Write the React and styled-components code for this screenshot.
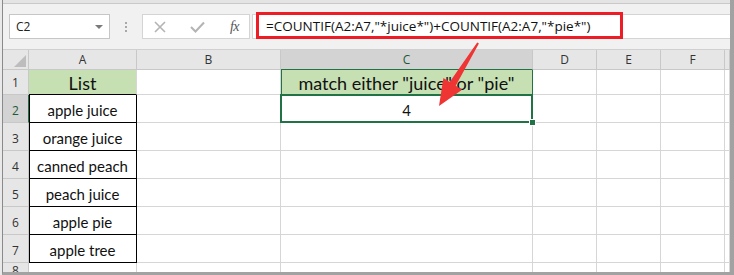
import React from "react";
import styled, { createGlobalStyle } from "styled-components";

const Global = createGlobalStyle`
  html, body { margin: 0; padding: 0; background: #e9e9e9; }
  * { box-sizing: border-box; }
`;

const Window = styled.div`
  position: relative;
  width: 734px;
  height: 275px;
  background: #e9e9e9;
  padding-left: 2px;
  overflow: hidden;
`;

const Inner = styled.div`
  height: 100%;
  display: flex;
  flex-direction: column;
  background: #f1f1f1;
  border-left: 1px solid #8a8a8a;
  border-right: 4px solid #a2a2a2;
  border-bottom: 3px solid #a2a2a2;
  overflow: hidden;
`;

const TopStrip = styled.div`
  height: 4px;
  flex: none;
  background: #e4e4e4;
  border-bottom: 1px solid #c9c9c9;
`;

const FormulaBar = styled.div`
  height: 46px;
  flex: none;
  display: flex;
  align-items: flex-start;
  padding-top: 10px;
  padding-left: 6px;
  background: #f1f1f1;
  border-bottom: 1px solid #d0d0d0;
`;

const NameBox = styled.div`
  width: 101px;
  height: 25px;
  background: #fff;
  border: 1px solid #c6c6c6;
  display: flex;
  align-items: center;
  justify-content: space-between;
  padding: 0 6px 0 6px;
  font-family: "Open Sans", sans-serif;
  font-size: 12px;
  color: #222;
`;

const Caret = styled.span`
  width: 0;
  height: 0;
  border-left: 4px solid transparent;
  border-right: 4px solid transparent;
  border-top: 4px solid #7a7a7a;
`;

const Grip = styled.div`
  width: 32px;
  height: 25px;
  display: flex;
  flex-direction: column;
  align-items: center;
  justify-content: center;
  gap: 2px;
`;

const Dot = styled.span`
  width: 2px;
  height: 2px;
  background: #a8a8a8;
`;

const FxBox = styled.div`
  width: 108px;
  height: 25px;
  background: #fff;
  border: 1px solid #d4d4d4;
  display: flex;
  align-items: center;
  justify-content: space-between;
  padding: 0 10px 0 11px;
`;

const FxLabel = styled.span`
  font-family: "Liberation Serif", serif;
  font-style: italic;
  font-size: 14px;
  color: #555;
  letter-spacing: -0.5px;
`;

const FormulaInput = styled.div`
  flex: 1;
  height: 25px;
  margin-left: 2px;
  background: #fff;
  border: 1px solid #d4d4d4;
  border-right: none;
  display: flex;
  align-items: center;
  padding-left: 3px;
`;

const Highlight = styled.div`
  height: 27px;
  width: 367px;
  margin-top: -2px;
  border: 3px solid #ee1c24;
  display: flex;
  align-items: center;
  padding-left: 7px;
  font-family: "Open Sans", sans-serif;
  font-size: 13.5px;
  color: #111;
  white-space: nowrap;
`;

const Sheet = styled.div`
  flex: 1;
  display: grid;
  grid-template-columns: 26px 108px 144px 252px 64px 64px 64px 1fr;
  grid-template-rows: 20px 25px repeat(6, 28px) 1fr;
  background: #fff;
`;

const ColHead = styled.div`
  position: relative;
  background: ${(p) => (p.$active ? "#d3d3d3" : "#e6e6e6")};
  border-right: 1px solid #c8c8c8;
  border-bottom: 1px solid ${(p) => (p.$active ? "#217346" : "#c8c8c8")};
  display: flex;
  align-items: center;
  justify-content: center;
  font-family: "Open Sans", sans-serif;
  font-size: 12px;
  color: ${(p) => (p.$active ? "#1d5a37" : "#333")};
`;

const Corner = styled(ColHead)`
  justify-content: flex-end;
  align-items: flex-end;
  padding: 0 2px 2px 0;
`;

const CornerTri = styled.span`
  width: 0;
  height: 0;
  border-left: 12px solid transparent;
  border-bottom: 12px solid #bdbdbd;
`;

const RowHead = styled.div`
  background: ${(p) => (p.$active ? "#d3d3d3" : "#e6e6e6")};
  border-right: 1px solid ${(p) => (p.$active ? "#217346" : "#c8c8c8")};
  border-bottom: 1px solid #c8c8c8;
  display: flex;
  align-items: flex-end;
  justify-content: center;
  padding-bottom: 3px;
  font-family: "Open Sans", sans-serif;
  font-size: 12px;
  line-height: 16px;
  color: ${(p) => (p.$active ? "#1d5a37" : "#333")};
  overflow: hidden;
`;

const Cell = styled.div`
  position: relative;
  background: ${(p) => (p.$fill ? "#c6e0b4" : "#fff")};
  border-right: 1px solid ${(p) => (p.$boxed ? "#000" : p.$green ? "#217346" : "#d6d6d6")};
  border-bottom: 1px solid ${(p) => (p.$boxed || p.$underline ? "#000" : "#d6d6d6")};
  box-shadow: ${(p) =>
    p.$boxed ? "inset 1px 0 0 #000" : p.$green ? "inset 1px 0 0 #217346" : "none"};
  display: flex;
  align-items: flex-end;
  justify-content: center;
  padding-bottom: ${(p) => (p.$big ? "2px" : "3px")};
  font-family: Lato, "Open Sans", sans-serif;
  font-size: ${(p) => (p.$big ? "18px" : "15px")};
  line-height: 18px;
  color: #111;
  white-space: nowrap;
`;

const Selected = styled(Cell)`
  &::after {
    content: "";
    position: absolute;
    left: -1px;
    top: -1px;
    right: -1px;
    bottom: -1px;
    border: 2px solid #217346;
  }
  &::before {
    content: "";
    position: absolute;
    right: -4px;
    bottom: -4px;
    width: 5px;
    height: 5px;
    background: #217346;
    border: 1px solid #fff;
    z-index: 2;
  }
`;

const Arrow = styled.svg`
  position: absolute;
  left: 0;
  top: 0;
  width: 734px;
  height: 275px;
  pointer-events: none;
`;

const cols = ["A", "B", "C", "D", "E", "F", ""];
const items = ["apple juice", "orange juice", "canned peach", "peach juice", "apple pie", "apple tree"];

export default function App() {
  return (
    <>
      <Global />
      <Window>
        <Inner>
          <TopStrip />
          <FormulaBar>
            <NameBox>
              C2
              <Caret />
            </NameBox>
            <Grip>
              <Dot />
              <Dot />
              <Dot />
            </Grip>
            <FxBox>
              <svg width="12" height="12" viewBox="0 0 12 12">
                <path d="M1 1 L11 11 M11 1 L1 11" stroke="#b4b4b4" strokeWidth="1.6" fill="none" />
              </svg>
              <svg width="15" height="12" viewBox="0 0 15 12">
                <path d="M1 6 L5.5 10.5 L14 1.5" stroke="#b4b4b4" strokeWidth="2" fill="none" />
              </svg>
              <FxLabel>fx</FxLabel>
            </FxBox>
            <FormulaInput>
              <Highlight>=COUNTIF(A2:A7,"*juice*")+COUNTIF(A2:A7,"*pie*")</Highlight>
            </FormulaInput>
          </FormulaBar>
          <Sheet>
            <Corner>
              <CornerTri />
            </Corner>
            {cols.map((c) => (
              <ColHead key={c || "g"} $active={c === "C"}>
                {c}
              </ColHead>
            ))}

            <RowHead>1</RowHead>
            <Cell $fill $big $underline>List</Cell>
            <Cell />
            <Cell $fill $big $green>match either "juice" or "pie"</Cell>
            <Cell />
            <Cell />
            <Cell />
            <Cell />

            {items.map((t, i) => (
              <React.Fragment key={t}>
                <RowHead $active={i === 0}>{i + 2}</RowHead>
                <Cell $boxed>{t}</Cell>
                <Cell />
                {i === 0 ? <Selected>4</Selected> : <Cell />}
                <Cell />
                <Cell />
                <Cell />
                <Cell />
              </React.Fragment>
            ))}

            <RowHead>8</RowHead>
            <Cell />
            <Cell />
            <Cell />
            <Cell />
            <Cell />
            <Cell />
            <Cell />
          </Sheet>
        </Inner>
        <Arrow viewBox="0 0 734 275">
          <polygon
            points="477.2,42.5 449.7,82.1 443.4,78.1 439,106 462.1,89.7 455.7,85.7 478.9,43.5"
            fill="#ef3434"
          />
        </Arrow>
      </Window>
    </>
  );
}
